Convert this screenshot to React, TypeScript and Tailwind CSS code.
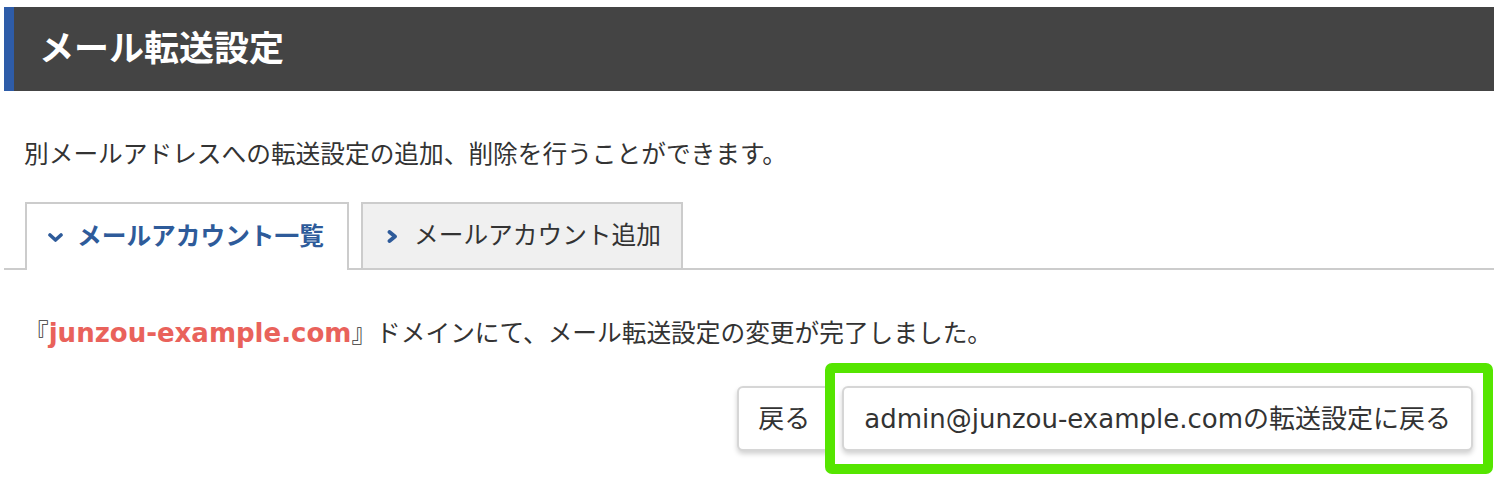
import React from "react";

const jp = '"DejaVu Sans", "Noto Sans CJK JP", sans-serif';

function ChevronDown() {
  return (
    <svg width="15" height="9" viewBox="0 0 15 9" className="shrink-0">
      <path d="M2 2 L7.5 7 L13 2" fill="none" stroke="#2e5b9a" strokeWidth="3.6" strokeLinecap="round" strokeLinejoin="round" />
    </svg>
  );
}

function ChevronRight() {
  return (
    <svg width="11" height="13" viewBox="0 0 11 13" className="shrink-0">
      <path d="M2.5 2 L8 6.5 L2.5 11" fill="none" stroke="#2e5b9a" strokeWidth="3.8" strokeLinecap="round" strokeLinejoin="round" />
    </svg>
  );
}

export default function App() {
  return (
    <div className="min-h-[486px] bg-white pt-[7px] pl-[4px] pr-[8px] text-[#333]" style={{ fontFamily: jp }}>
      <header className="h-[84px] bg-[#444444] border-l-[10px] border-[#2e5ca8] flex items-center pl-[25px]">
        <h1 className="text-[35px] font-bold text-white leading-none">メール転送設定</h1>
      </header>

      <p className="mt-[46px] pl-[20px] text-[24.7px] leading-[36px]">
        別メールアドレスへの転送設定の追加、削除を行うことができます。
      </p>

      <div className="mt-[29px] flex items-end gap-[12px] pl-[21px] border-b-2 border-[#cccccc]">
        <div className="w-[324px] h-[68px] -mb-[2px] bg-white border-2 border-b-0 border-[#cccccc] flex items-center pl-[21px] gap-[14px]">
          <ChevronDown />
          <span className="text-[24.7px] font-bold text-[#2e5b9a] leading-none whitespace-nowrap">メールアカウント一覧</span>
        </div>
        <div className="w-[322px] h-[66px] bg-[#f0f0f0] border-2 border-b-0 border-[#cccccc] flex items-center pl-[24px] gap-[16px]">
          <ChevronRight />
          <span className="text-[24.7px] text-[#333] leading-none whitespace-nowrap">メールアカウント追加</span>
        </div>
      </div>

      <p className="mt-[45px] pl-[20px] text-[24.7px] leading-[36px] whitespace-nowrap">
        『<span className="font-bold text-[#e9625b] text-[26px]">junzou-example.com</span>』ドメインにて、メール転送設定の変更が完了しました。
      </p>

      <div className="mt-[34px] flex justify-end gap-[11px] pr-[21px]">
        <button className="h-[65px] px-[19px] bg-white border-2 border-[#d6d6d6] rounded-[6px] shadow-[0_3px_5px_rgba(0,0,0,0.18)] text-[26px] text-[#333] leading-none whitespace-nowrap">
          戻る
        </button>
        <div className="relative">
          <div className="absolute -left-[17px] -right-[20px] -top-[23px] -bottom-[23px] border-[10px] border-[#55e500] rounded-[7px] pointer-events-none" />
          <button className="relative h-[65px] px-[20px] bg-white border-2 border-[#d6d6d6] rounded-[6px] shadow-[0_3px_5px_rgba(0,0,0,0.18)] text-[26px] text-[#333] leading-none whitespace-nowrap">
            admin@junzou-example.comの転送設定に戻る
          </button>
        </div>
      </div>
    </div>
  );
}
